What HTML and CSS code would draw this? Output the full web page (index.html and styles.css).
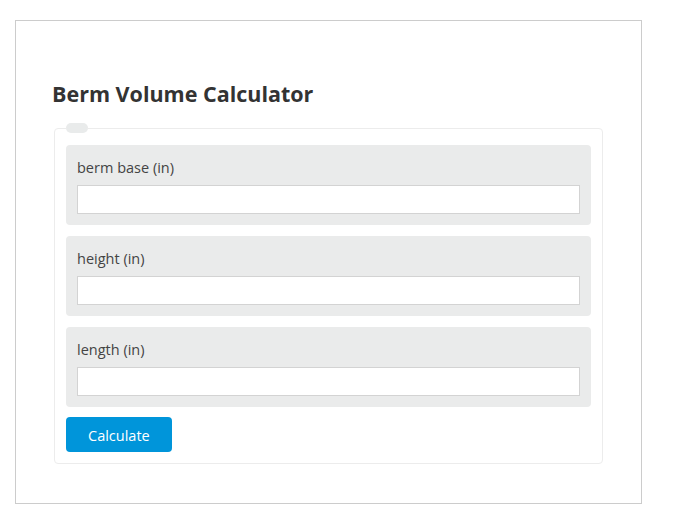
FILE: index.html
```html
<!DOCTYPE html>
<html lang="en">
<head>
    <meta charset="UTF-8">
    <meta name="viewport" content="width=device-width, initial-scale=1.0">
    <title>Berm Volume Calculator</title>
    <link rel="stylesheet" href="styles.css">
</head>
<body>
    <div class="page">
        <div class="calc-box">
            <h2 class="calc-title">Berm Volume Calculator</h2>
            <form class="calc-form" onsubmit="return false">
                <fieldset>
                    <legend></legend>
                    <div class="form-group">
                        <label for="base">berm base (in)</label>
                        <input type="text" id="base">
                    </div>
                    <div class="form-group">
                        <label for="height">height (in)</label>
                        <input type="text" id="height">
                    </div>
                    <div class="form-group">
                        <label for="length">length (in)</label>
                        <input type="text" id="length">
                    </div>
                    <button type="submit">Calculate</button>
                </fieldset>
            </form>
        </div>
    </div>
</body>
</html>
```

FILE: styles.css
```css
body {
    margin: 0;
    font-family: "Open Sans", Arial, sans-serif;
    background-color: white;
}
.page {
    padding: 20px 0 0 15px;
}
.calc-box {
    width: 553px;
    border: 1px solid #cccccc;
    padding: 60px 36px 39px 36px;
}
.calc-title {
    margin: 0 0 16px;
    font-size: 21.5px;
    line-height: 26px;
    font-weight: 700;
    color: #333333;
}
.calc-form fieldset {
    margin: 0 2px;
    padding: 12px 11px 11px;
    border: 1px solid #ececec;
    border-radius: 4px;
    min-width: 0;
}
.calc-form legend {
    width: 22px;
    height: 10px;
    padding: 0;
    background-color: #e9ebeb;
    border-radius: 5px;
}
.form-group {
    background-color: #eaebeb;
    border-radius: 4px;
    padding: 11px;
    margin-bottom: 11px;
}
.form-group:last-of-type {
    margin-bottom: 10px;
}
label {
    display: block;
    font-size: 14.5px;
    line-height: 24px;
    color: #444444;
    margin-bottom: 5px;
}
input {
    display: block;
    width: 100%;
    height: 29px;
    border: 1px solid #d3d3d3;
    background-color: white;
    box-sizing: border-box;
    margin: 0;
    font-family: inherit;
}
button {
    display: block;
    height: 35px;
    padding: 1px 22px 0;
    background-color: #0095da;
    color: white;
    border: none;
    border-radius: 4px;
    font-family: inherit;
    font-size: 14.5px;
    cursor: pointer;
}
```
